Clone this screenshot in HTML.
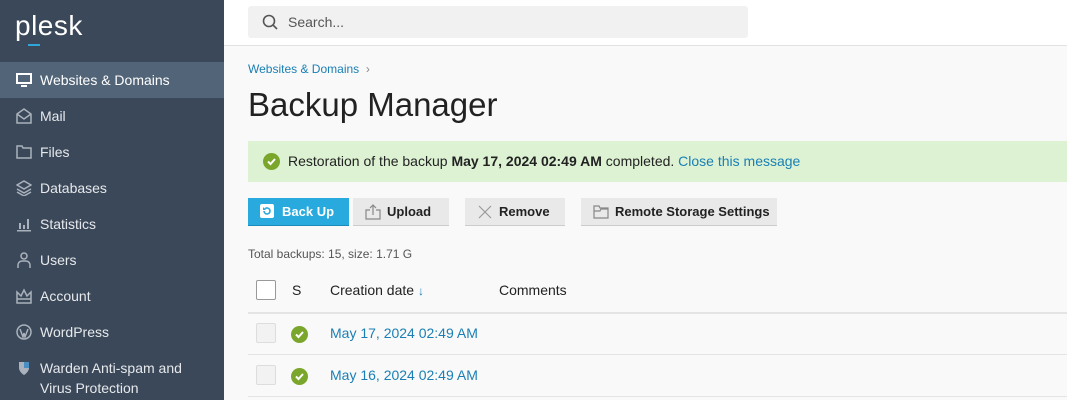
<!DOCTYPE html>
<html><head><meta charset="utf-8"><style>
*{margin:0;padding:0;box-sizing:border-box}
body{width:1067px;height:400px;overflow:hidden;font-family:"Liberation Sans",sans-serif;background:#f9f9f9;position:relative;color:#222}
.sb{position:absolute;left:0;top:0;width:224px;height:400px;background:#3b4859}
.logo{position:absolute;left:15px;top:10px;color:#fff;font-size:28px;letter-spacing:0.5px;font-weight:300}
.logo i{position:absolute;left:13px;top:34px;width:12px;height:2px;background:#2ea6d9}
.it{position:absolute;left:0;width:224px;height:36px;color:#e6e9ec;font-size:14px;line-height:36px;padding-left:40px}
.it.a{background:#526478;color:#fff}
.it svg{position:absolute;left:16px;top:10px}
.top{position:absolute;left:224px;top:0;right:0;height:46px;background:#fff;border-bottom:1px solid #e2e2e2}
.search{position:absolute;left:24px;top:6px;width:500px;height:32px;background:#f1f1f1;border-radius:3px;color:#555;font-size:14px;line-height:32px;padding-left:40px}
.bc{position:absolute;left:248px;top:62px;font-size:12px;color:#1a7fb4}
h1{position:absolute;left:248px;top:86px;font-size:33px;font-weight:400;color:#222}
.msg{position:absolute;left:248px;top:141px;right:0;height:41px;background:#ddf2d3;font-size:14px;line-height:41px;padding-left:40px}
.msg a{color:#1a7fb4}
.btn{position:absolute;top:198px;height:28px;background:#e9e9e9;border-bottom:1px solid #ccc;font-size:13px;font-weight:bold;line-height:28px;padding-left:34px;color:#222}
.btn svg{position:absolute;left:12px;top:6px}
.tot{position:absolute;left:248px;top:247px;font-size:12px;color:#555}
.th{position:absolute;top:282px;font-size:14px}
.row{position:absolute;left:248px;right:0;height:1px;background:#e4e4e4}
.cb{position:absolute;left:256px;width:20px;height:20px;border:1px solid #ddd;background:#f2f2f2;border-radius:2px}
.ok{position:absolute;left:291px;width:17px;height:17px;border-radius:50%;background:#7aa72b}
.lk{position:absolute;left:330px;font-size:14px;color:#1a7fb4}
</style></head><body>
<div class="sb">
<div class="logo">plesk<i></i></div>
<div class="it a" style="top:62px"><svg width="16" height="16"><rect x="1" y="2" width="14" height="9" fill="none" stroke="#fff" stroke-width="2"/><rect x="5" y="13" width="6" height="2" fill="#fff"/></svg>Websites &amp; Domains</div>
<div class="it" style="top:98px"><svg width="16" height="16" fill="none" stroke="#aab2bc" stroke-width="1.5"><path d="M1 6l7-5 7 5v9H1z M1 6l7 5 7-5"/></svg>Mail</div>
<div class="it" style="top:134px"><svg width="16" height="16" fill="none" stroke="#aab2bc" stroke-width="1.5"><path d="M1 2h5l1 2h8v10H1z"/></svg>Files</div>
<div class="it" style="top:170px"><svg width="16" height="16" fill="none" stroke="#aab2bc" stroke-width="1.5"><path d="M1 5l7-4 7 4-7 4z M1 9l7 4 7-4 M1 12l7 4 7-4"/></svg>Databases</div>
<div class="it" style="top:206px"><svg width="16" height="16" fill="#aab2bc"><rect x="3" y="7" width="2" height="6"/><rect x="7" y="9" width="2" height="4"/><rect x="11" y="3" width="2" height="10"/><rect x="1" y="14" width="14" height="1.5"/></svg>Statistics</div>
<div class="it" style="top:242px"><svg width="16" height="16" fill="none" stroke="#aab2bc" stroke-width="1.5"><circle cx="8" cy="4" r="3"/><path d="M2 16v-3a4 4 0 0 1 4-4h4a4 4 0 0 1 4 4v3"/></svg>Users</div>
<div class="it" style="top:278px"><svg width="16" height="16" fill="none" stroke="#aab2bc" stroke-width="1.5"><path d="M1 15V4l4 4 3-6 3 6 4-4v11z M1 11h14"/></svg>Account</div>
<div class="it" style="top:314px"><svg width="16" height="16" fill="none" stroke="#aab2bc" stroke-width="1.5"><circle cx="8" cy="8" r="7"/><path d="M4 5l3 8 1-4 1 4 3-8"/></svg>WordPress</div>
<div class="it" style="top:350px;line-height:20px;padding-top:8px"><svg width="16" height="16"><path d="M3 2h10v6c0 4-5 7-5 7s-5-3-5-7z" fill="#aab2bc"/><rect x="8" y="2" width="5" height="6" fill="#4a8fc4"/></svg>Warden Anti-spam and<br>Virus Protection</div>
</div>
<div class="top"><div class="search"><svg style="position:absolute;left:14px;top:8px" width="16" height="16" fill="none" stroke="#555" stroke-width="1.6"><circle cx="7" cy="7" r="5.5"/><path d="M11 11l4 4"/></svg>Search...</div></div>
<div class="bc">Websites &amp; Domains <span style="color:#888">&nbsp;›</span></div>
<h1>Backup Manager</h1>
<div class="msg"><svg style="position:absolute;left:15px;top:12px" width="17" height="17"><circle cx="8.5" cy="8.5" r="8.5" fill="#7aa72b"/><path d="M5 8.5l2.5 2.5 4.5-5" stroke="#fff" stroke-width="2" fill="none"/></svg>Restoration of the backup <b>May 17, 2024 02:49 AM</b> completed. <a>Close this message</a></div>
<div class="btn" style="left:248px;width:101px;background:#28aade;color:#fff;border-bottom-color:#1a8ab8"><svg width="14" height="14"><rect width="14" height="14" rx="2" fill="#fff"/><path d="M4 7a3 3 0 1 0 1-2.3" stroke="#28aade" stroke-width="1.6" fill="none"/><path d="M3 3v3h3z" fill="#28aade"/></svg>Back Up</div>
<div class="btn" style="left:353px;width:96px"><svg width="16" height="16" fill="none" stroke="#888" stroke-width="1.2"><path d="M5 6H1v9h14V6h-4 M8 11V1 M5 4l3-3 3 3"/></svg>Upload</div>
<div class="btn" style="left:465px;width:100px"><svg width="16" height="16" fill="none" stroke="#999" stroke-width="1.2"><path d="M2 2l12 12M14 2L2 14"/></svg>Remove</div>
<div class="btn" style="left:581px;width:196px"><svg width="16" height="16" fill="none" stroke="#888" stroke-width="1.2"><path d="M1 2h5l1 2h8v10H1z M1 7h6l1-2h7"/></svg>Remote Storage Settings</div>
<div class="tot">Total backups: 15, size: 1.71 G</div>
<div style="position:absolute;left:256px;top:280px;width:20px;height:20px;border:1px solid #999;background:#fff;border-radius:2px"></div>
<div class="th" style="left:292px">S</div>
<div class="th" style="left:330px">Creation date <span style="color:#1a7fb4;font-size:12px">↓</span></div>
<div class="th" style="left:499px">Comments</div>
<div class="row" style="top:312px;height:2px"></div>
<div class="cb" style="top:323px"></div><div class="ok" style="top:326px"><svg width="17" height="17"><path d="M5 8.5l2.5 2.5 4.5-5" stroke="#fff" stroke-width="2" fill="none"/></svg></div>
<div class="lk" style="top:325px">May 17, 2024 02:49 AM</div>
<div class="row" style="top:354px"></div>
<div class="cb" style="top:365px"></div><div class="ok" style="top:368px"><svg width="17" height="17"><path d="M5 8.5l2.5 2.5 4.5-5" stroke="#fff" stroke-width="2" fill="none"/></svg></div>
<div class="lk" style="top:367px">May 16, 2024 02:49 AM</div>
<div class="row" style="top:396px"></div>
</body></html>
